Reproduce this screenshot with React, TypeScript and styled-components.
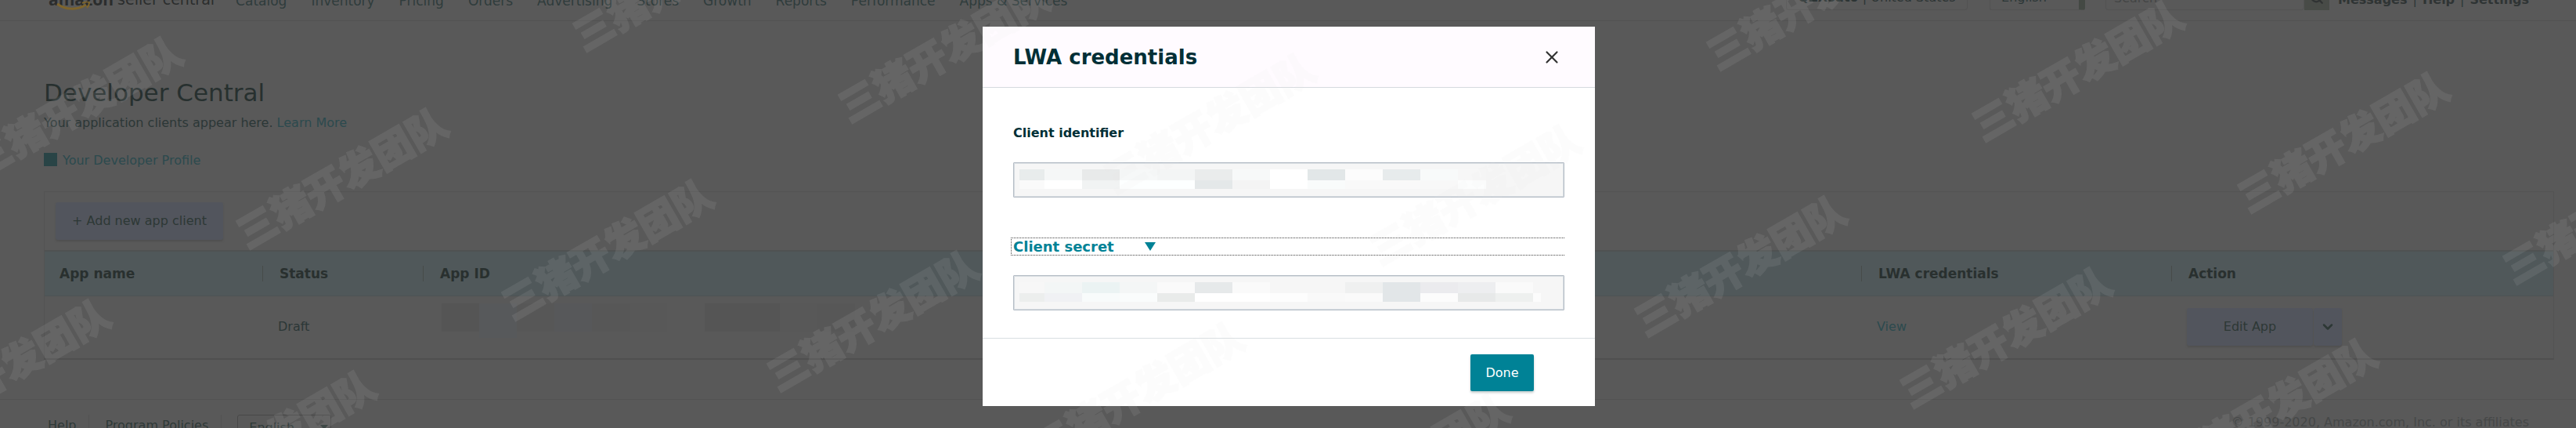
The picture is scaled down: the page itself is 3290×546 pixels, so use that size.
import React from "react";
import styled, { createGlobalStyle } from "styled-components";
import { ChevronDown, Search, X } from "lucide-react";

const GlobalStyle = createGlobalStyle`
  *, *::before, *::after { box-sizing: border-box; }
  body {
    margin: 0;
    background: #595959;
    color: #2c3737;
    font-family: "DejaVu Sans", sans-serif;
    font-size: 16px;
    line-height: 20px;
  }
  button, input, select { font: inherit; color: inherit; }
`;

const Screen = styled.div`
  position: relative;
  height: 100vh;
  overflow: hidden;
`;

/* ---------- top bar ---------- */

const TopBar = styled.header`
  display: flex;
  align-items: flex-end;
  height: 27px;
  padding: 0 60px 15px 62px;
  overflow: hidden;
  border-bottom: 1px solid #525252;
`;

const Brand = styled.a`
  position: relative;
  display: flex;
  gap: 5px;
  color: #2b2d2d;
  font-size: 19px;
  line-height: 24px;
  text-decoration: none;
  white-space: nowrap;
`;

const BrandBold = styled.strong`
  font-family: "Open Sans", sans-serif;
  font-size: 21px;
`;

const Smile = styled.svg`
  position: absolute;
  left: 10px;
  bottom: -2px;
  width: 44px;
  height: 11px;
`;

const MainNav = styled.nav`
  display: flex;
  flex: 1;
  gap: 31px;
  padding-left: 27px;
`;

const NavLink = styled.a`
  color: #2f3c3c;
  font-size: 17px;
  text-decoration: none;
  white-space: nowrap;
`;

const TopTools = styled.div`
  display: flex;
  align-items: flex-end;
  margin-bottom: -2px;
`;

const AccountButton = styled.button`
  width: 232px;
  height: 32px;
  padding: 0;
  border: 1px solid #525252;
  border-radius: 3px;
  background: transparent;
  color: #2c3434;
  white-space: nowrap;
`;

const TopSelect = styled.select`
  width: 122px;
  height: 32px;
  margin-left: 28px;
  padding: 0 14px;
  appearance: none;
  border: 1px solid #525252;
  border-right: 8px solid #444944;
  border-radius: 3px;
  background: transparent;
`;

const SearchForm = styled.form`
  display: flex;
  margin-left: 26px;
`;

const SearchInput = styled.input`
  width: 254px;
  height: 32px;
  padding: 0 10px;
  border: 1px solid #525252;
  border-radius: 3px;
  background: transparent;
  &::placeholder { color: #434545; opacity: 1; }
`;

const SearchButton = styled.button`
  display: flex;
  align-items: center;
  justify-content: center;
  width: 32px;
  height: 32px;
  padding: 0;
  border: 0;
  background: #484b47;
  color: #303333;
`;

const QuickLinks = styled.nav`
  display: flex;
  gap: 7px;
  margin: 0 0 3px 11px;
`;

const QuickLink = styled.a`
  color: #2f3434;
  font-size: 16px;
  font-weight: bold;
  text-decoration: none;
`;

/* ---------- page ---------- */

const Main = styled.main`
  padding: 72px 28px 0 56px;
`;

const PageTitle = styled.h1`
  margin: 0;
  color: #27302f;
  font-size: 31px;
  font-weight: normal;
  line-height: 38px;
`;

const Intro = styled.p`
  margin: 10px 0 0;
`;

const TextLink = styled.a`
  color: #2c4a4e;
  text-decoration: none;
`;

const ProfileLink = styled(TextLink)`
  display: flex;
  align-items: flex-end;
  gap: 7px;
  width: max-content;
  margin-top: 28px;
`;

const ProfileMark = styled.span`
  width: 17px;
  height: 17px;
  margin-bottom: 3px;
  background: #294446;
`;

const Card = styled.section`
  margin-top: 29px;
  border: 1px solid #535353;
  border-bottom: 2px solid #4f4f4f;
`;

const CardBar = styled.div`
  padding: 13px 14px;
`;

const SoftButton = styled.button<{ $width: number }>`
  display: flex;
  align-items: center;
  justify-content: center;
  width: ${(p) => p.$width}px;
  height: 48px;
  padding: 0;
  border: 0;
  border-radius: 3px;
  background: #52555d;
  box-shadow: 0 2px 2px #515151;
  color: #2d3835;
`;

const SplitButton = styled.div`
  display: flex;
  gap: 1px;
`;

const Table = styled.table`
  width: 100%;
  border-collapse: collapse;
  table-layout: fixed;
`;

const HeadCell = styled.th`
  height: 57px;
  padding: 0;
  border-top: 2px solid #4f5252;
  border-bottom: 1px solid #4d5354;
  background: #50585a;
  color: #29302f;
  font-size: 17px;
  text-align: left;
`;

const HeadLabel = styled.span<{ $first?: boolean }>`
  display: block;
  padding-left: ${(p) => (p.$first ? 19 : 21)}px;
  border-left: ${(p) => (p.$first ? "0" : "1px solid #474b49")};
`;

const Cell = styled.td`
  height: 80px;
  padding: 0 0 0 20px;
`;

const Redaction = styled.div`
  display: flex;
  height: 44px;
  margin: -16px 0 0 4px;
`;

const RedactionBlock = styled.span<{ $tone: string; $tall?: boolean }>`
  width: 48px;
  height: ${(p) => (p.$tall ? 44 : 36)}px;
  background: ${(p) => p.$tone};
`;

const Footer = styled.footer`
  display: flex;
  align-items: flex-start;
  height: 60px;
  margin-top: 50px;
  padding: 19px 60px 0 61px;
  border-top: 1px solid #525252;
`;

const FooterLink = styled.a`
  height: 40px;
  margin-right: 20px;
  padding: 4px 16px 0 0;
  border-right: 1px solid #525252;
  color: #2f3a38;
  text-decoration: none;
`;

const FooterSelect = styled.div`
  position: relative;
  display: flex;
  align-items: center;
  color: #2f3a38;
  svg { position: absolute; right: 4px; top: 13px; }
`;

const FooterSelectBox = styled.select`
  width: 120px;
  height: 36px;
  padding: 0 14px 2px;
  appearance: none;
  border: 1px solid #484848;
  border-radius: 3px;
  background: transparent;
`;

const Copyright = styled.small`
  margin-left: auto;
  color: #464848;
  font-size: 16px;
`;

/* ---------- dialog ---------- */

const Backdrop = styled.div`
  position: absolute;
  inset: 0;
  display: flex;
  align-items: flex-start;
  justify-content: center;
  padding: 34px 0 0 2px;
`;

const Dialog = styled.div`
  width: 782px;
  max-width: 100%;
  background: #fff;
  color: #002f36;
`;

const DialogHead = styled.div`
  display: flex;
  align-items: center;
  justify-content: space-between;
  height: 78px;
  padding: 0 42px 0 39px;
  border-bottom: 1px solid #d5d9de;
  background: #fffbff;
`;

const DialogTitle = styled.h2`
  margin: 0;
  font-size: 26px;
  line-height: 32px;
`;

const CloseButton = styled.button`
  display: flex;
  padding: 0;
  border: 0;
  background: transparent;
  color: #333;
`;

const DialogBody = styled.div`
  padding: 48px 39px 35px;
`;

const FieldLabel = styled.label`
  display: block;
  font-weight: bold;
`;

const Field = styled.div<{ $gap: number }>`
  position: relative;
  margin-top: ${(p) => p.$gap}px;
`;

const ReadOnlyInput = styled.input`
  display: block;
  width: 100%;
  height: 45px;
  border: 1px solid #b4bcc5;
  border-radius: 1px;
  background: #f6f6f6;
  box-shadow: inset 0 0 0 1px #d8dde2;
  outline: 0;
`;

const Mosaic = styled.div`
  position: absolute;
  left: 8px;
  top: 9px;
  display: grid;
  grid-template-rows: 14px 11px;
`;

const MosaicRow = styled.div`
  display: flex;
`;

const MosaicCell = styled.span<{ $tone: string; $width: number }>`
  width: ${(p) => p.$width}px;
  background: ${(p) => p.$tone};
`;

const SecretToggle = styled.button`
  display: flex;
  align-items: center;
  gap: 39px;
  width: calc(100% + 3px);
  height: 23px;
  margin: 51px 0 0 -3px;
  padding: 0 0 0 2px;
  border: 1px dotted #444;
  border-right: 0;
  background: transparent;
  color: #008296;
  font-size: 18px;
  font-weight: bold;
`;

const DialogFoot = styled.div`
  display: flex;
  justify-content: flex-end;
  padding: 20px 78px 19px;
  border-top: 1px solid #d9dfe1;
`;

const DoneButton = styled.button`
  width: 81px;
  height: 47px;
  padding: 0;
  border: 0;
  border-radius: 2px;
  background: #008296;
  box-shadow: 0 2px 3px #c4cccd;
  color: #fff;
`;

/* ---------- watermark ---------- */

const WatermarkLayer = styled.div`
  position: absolute;
  inset: 0;
  overflow: hidden;
  pointer-events: none;
`;

const Watermark = styled.span<{ $x: number; $y: number }>`
  position: absolute;
  left: ${(p) => p.$x - 150}px;
  top: ${(p) => p.$y - 25}px;
  width: 300px;
  transform: rotate(-30deg);
  color: #e8e8e8;
  opacity: 0.085;
  -webkit-text-stroke: 2px #e8e8e8;
  font-family: "Noto Sans CJK SC", sans-serif;
  font-size: 50px;
  font-weight: 900;
  line-height: 50px;
  white-space: nowrap;
`;

const runs = [
  { x: 96, y: 133, count: 6 },
  { x: 4, y: 468, count: 2 },
  { x: 865, y: -28, count: 7 },
  { x: 2313, y: -4, count: 4 },
];

const marks = runs.flatMap((run) =>
  Array.from({ length: run.count }, (_, i) => ({ x: run.x + 339 * i, y: run.y + 91 * i })),
);

const navItems = [
  "Catalog", "Inventory", "Pricing", "Orders", "Advertising",
  "Stores", "Growth", "Reports", "Performance", "Apps & Services",
];

const identifierRows = [
  ["#e8ecec", "#f5f7f7", "#e8eaea", "#f6f8f8", "#f3f5f5", "#eaecec", "#f7f9f9", "#fff", "#e2e7e8", "#fcfcfc", "#e7ebec", "#f8fafa", "#f7f7f7"],
  ["#fafafa", "#fff", "#f1f3f3", "#fdffff", "#fdffff", "#e4e8e9", "#f4f4f4", "#fff", "#f9fbfb", "#f9f9f9", "#f9f9f9", "#f8f8f8", "#fcfdfd"],
];

const secretRows = [
  ["#f7f7f7", "#f3f6f6", "#ebf3f3", "#f4f6f6", "#fafafa", "#e6e9ea", "#fafafa", "#f6f6f6", "#f6f6f6", "#eff0f0", "#e2e6e8", "#ebebee", "#edeef0", "#fafafa", "#f6f6f6"],
  ["#eceeed", "#f0f1f4", "#f8fbfb", "#fafcfc", "#e9ebea", "#fff", "#fff", "#fdfdfd", "#f9f9f9", "#fafafa", "#e2e6e8", "#fcfcfc", "#e7e9e9", "#eef0ef", "#fcfcfc"],
];

const appIdTones = ["#555555", "#57595b", "#575757", "#57585a", "#575757", "#585858", "#595959", "#555555", "#555555", "#585858", "#575757"];

function HiddenValue({ rows, last }: { rows: string[][]; last: number }) {
  return (
    <Mosaic aria-hidden="true">
      {rows.map((row, r) => (
        <MosaicRow key={r}>
          {row.map((tone, i) => (
            <MosaicCell key={i} $tone={tone} $width={i === 0 ? 32 : i === row.length - 1 ? last : 48} />
          ))}
        </MosaicRow>
      ))}
    </Mosaic>
  );
}

export default function App() {
  return (
    <Screen>
      <GlobalStyle />
      <TopBar>
        <Brand href="#home">
          <BrandBold>amazon</BrandBold>
          <span>seller central</span>
          <Smile viewBox="0 0 44 11" fill="none" stroke="#7d642c" strokeWidth="3" aria-hidden="true">
            <path d="M1 3C12 11 27 11 38 4" />
            <path d="M33 2C37 0 41 0 42 1C42 4 41 6 39 8" strokeWidth="2" />
          </Smile>
        </Brand>
        <MainNav>
          {navItems.map((item) => (
            <NavLink key={item} href="#nav">{item}</NavLink>
          ))}
        </MainNav>
        <TopTools>
          <AccountButton><strong>QZXsdt0</strong> | United States</AccountButton>
          <TopSelect aria-label="Language"><option>English</option></TopSelect>
          <SearchForm>
            <SearchInput aria-label="Search" placeholder="Search" />
            <SearchButton type="button" aria-label="Search"><Search size={18} strokeWidth={3} /></SearchButton>
          </SearchForm>
          <QuickLinks>
            <QuickLink href="#messages">Messages</QuickLink>
            <span>|</span>
            <QuickLink href="#help">Help</QuickLink>
            <span>|</span>
            <QuickLink href="#settings">Settings</QuickLink>
          </QuickLinks>
        </TopTools>
      </TopBar>

      <Main>
        <PageTitle>Developer Central</PageTitle>
        <Intro>
          Your application clients appear here. <TextLink href="#learn">Learn More</TextLink>
        </Intro>
        <ProfileLink href="#profile"><ProfileMark />Your Developer Profile</ProfileLink>

        <Card>
          <CardBar>
            <SoftButton $width={214}>+ Add new app client</SoftButton>
          </CardBar>
          <Table>
            <colgroup>
              <col width="278" />
              <col width="205" />
              <col />
              <col width="396" />
              <col width="488" />
            </colgroup>
            <thead>
              <tr>
                <HeadCell><HeadLabel $first>App name</HeadLabel></HeadCell>
                <HeadCell><HeadLabel>Status</HeadLabel></HeadCell>
                <HeadCell><HeadLabel>App ID</HeadLabel></HeadCell>
                <HeadCell><HeadLabel>LWA credentials</HeadLabel></HeadCell>
                <HeadCell><HeadLabel>Action</HeadLabel></HeadCell>
              </tr>
            </thead>
            <tbody>
              <tr>
                <Cell />
                <Cell>Draft</Cell>
                <Cell>
                  <Redaction>
                    {appIdTones.map((tone, i) => (
                      <RedactionBlock key={i} $tone={tone} $tall={i === 1} />
                    ))}
                  </Redaction>
                </Cell>
                <Cell><TextLink href="#view">View</TextLink></Cell>
                <Cell>
                  <SplitButton>
                    <SoftButton $width={161}>Edit App</SoftButton>
                    <SoftButton $width={36} aria-label="More actions"><ChevronDown size={20} strokeWidth={3} /></SoftButton>
                  </SplitButton>
                </Cell>
              </tr>
            </tbody>
          </Table>
        </Card>
      </Main>

      <Footer>
        <FooterLink href="#help">Help</FooterLink>
        <FooterLink href="#policies">Program Policies</FooterLink>
        <FooterSelect>
          <FooterSelectBox aria-label="Site language"><option>English</option></FooterSelectBox>
          <svg width="10" height="6" viewBox="0 0 10 6" fill="#2f3a38" aria-hidden="true"><path d="M0 0H10L5 6Z" /></svg>
        </FooterSelect>
        <Copyright>© 1999-2020, Amazon.com, Inc. or its affiliates</Copyright>
      </Footer>

      <Backdrop>
        <Dialog role="dialog" aria-modal="true" aria-labelledby="dialog-title">
          <DialogHead>
            <DialogTitle id="dialog-title">LWA credentials</DialogTitle>
            <CloseButton aria-label="Close">
              <X size={26} strokeWidth={2} />
            </CloseButton>
          </DialogHead>
          <DialogBody>
            <FieldLabel htmlFor="client-id">Client identifier</FieldLabel>
            <Field $gap={27}>
              <ReadOnlyInput id="client-id" readOnly />
              <HiddenValue rows={identifierRows} last={36} />
            </Field>
            <SecretToggle aria-expanded="true">
              Client secret
              <svg width="14" height="11" viewBox="0 0 14 11" fill="#008296" aria-hidden="true"><path d="M0 0H14L7 11Z" /></svg>
            </SecretToggle>
            <Field $gap={25}>
              <ReadOnlyInput aria-label="Client secret" readOnly />
              <HiddenValue rows={secretRows} last={10} />
            </Field>
          </DialogBody>
          <DialogFoot>
            <DoneButton>Done</DoneButton>
          </DialogFoot>
        </Dialog>
      </Backdrop>

      <WatermarkLayer aria-hidden="true">
        {marks.map((mark) => (
          <Watermark key={`${mark.x}-${mark.y}`} $x={mark.x} $y={mark.y}>三猪开发团队</Watermark>
        ))}
      </WatermarkLayer>
    </Screen>
  );
}
